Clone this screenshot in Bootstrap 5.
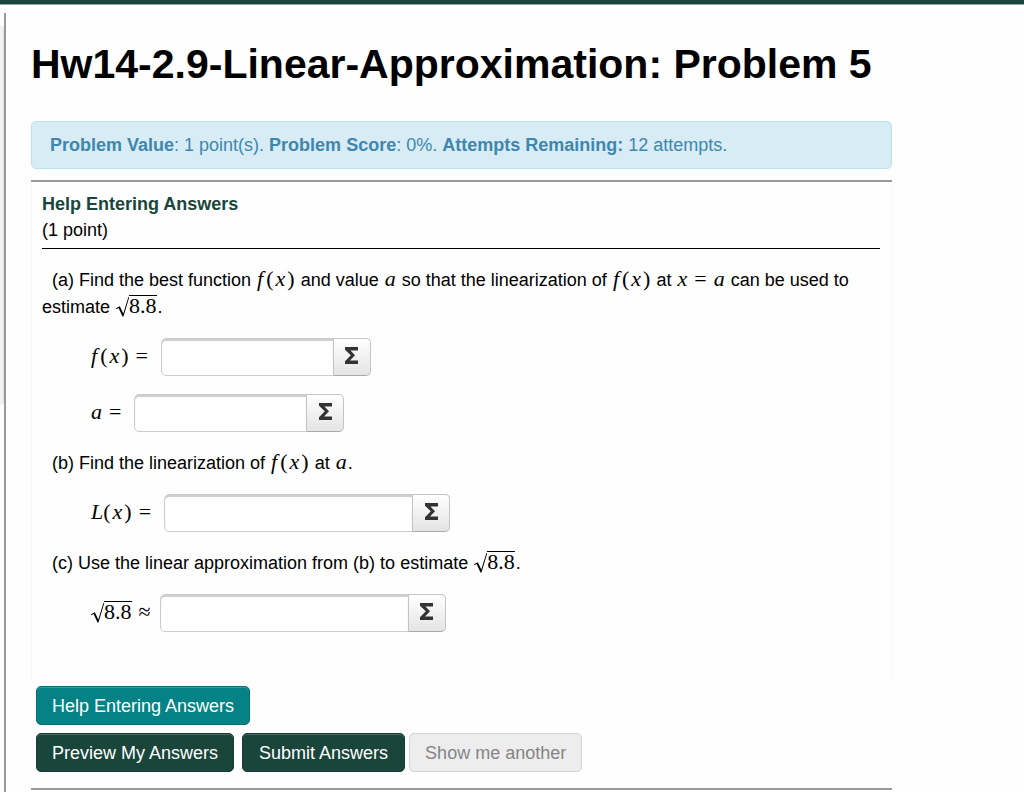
<!DOCTYPE html>
<html lang="en">
<head>
<meta charset="utf-8">
<meta name="viewport" content="width=device-width, initial-scale=1">
<title>Hw14-2.9-Linear-Approximation: Problem 5</title>
<link href="https://cdn.jsdelivr.net/npm/bootstrap@5.3.0/dist/css/bootstrap.min.css" rel="stylesheet">
<style>
  body { font-family: "Liberation Sans", Arial, sans-serif; font-size: 18px; line-height: 27px; color: #000; background: #fefefe; }
  .topbar { height: 5px; background: #1a453b; border-bottom: 1px solid #8fa7a1; }
  .side { width: 4px; height: 380px; margin-top: 12px; background: #f3f3f3; border-right: 1px solid #e3e3e3; border-radius: 0 5px 5px 0; }
  .page-body { margin-top: 8px; min-height: calc(100vh - 13px); }
  .content-col { border-left: 2px solid #999; padding: 27px 132px 0 25px; min-width: 0; }
  h1 { font-size: 41px; line-height: 48px; font-weight: 700; margin-bottom: 33px; }
  .alert-score { background: #d7ecf5; border: 1px solid #bce3ea; color: #3f87ad; border-radius: 5px; padding: 10px 18px; line-height: 26px; margin-bottom: 11px; }
  .rule { height: 2px; background: #999; border: 0; opacity: 1; margin: 0; }
  .problem { border: solid #f8f8f8; border-width: 0 1px; padding: 9px 11px 32px 10px; }
  .intro { line-height: 26px; }
  .help-link { color: #1a453b; font-weight: 700; text-decoration: none; }
  .inner-rule { border-top: 1px solid #000; opacity: 1; margin: 5px 0 18px; }
  .problem p { margin-bottom: 17px; }
  .part { padding-left: 10px; }
  .lead-in { text-indent: 10px; }
  .answer { margin: 0 0 18px 49px; }
  .math { font-family: "Liberation Serif", "Times New Roman", serif; font-size: 22px; line-height: 24px; white-space: nowrap; text-indent: 0; }
  p .math { padding: 0 1px; }
  .math .arg { padding: 0 2px; }
  .math .fn { padding-right: 3px; }
  .answer .math { padding-bottom: 3px; }
  .rel { padding: 0 5px 0 7px; }
  p .rel { padding: 0 7px; }
  .radicand { border-top: 1px solid #000; display: inline-block; line-height: 19px; }
  .radical { width: 13px; height: 20px; vertical-align: -4px; }
  .short { width: 210px; }
  .long { width: 286px; }
  .answer .form-control { height: 38px; border: 1px solid #ccc; border-radius: 5px; box-shadow: inset 0 2px 1px #ccc; }
  .sigma { width: 38px; padding: 0; border: 1px solid #c4c4c4; border-bottom-color: #aaa; border-radius: 5px; background: linear-gradient(#fff, #e4e4e4); }
  .sigma svg { width: 13px; height: 17px; display: block; margin: -3px auto 0; }
  .actions { padding: 4px 0 16px 5px; }
  .btn-ww { font-size: 18px; line-height: 24px; height: 39px; padding: 6px 15px; border-radius: 5px; }
  .btn-teal { background: #058285; color: #fff; border-color: #057073; box-shadow: inset 0 1px 0 #379b9d; }
  .btn-green { background: #1a453b; color: #fff; border-color: #173c33; box-shadow: inset 0 1px 0 #486a62; }
  .btn-wide { padding: 6px 16px; }
  .btn-off:disabled { background: #ededed; color: #858585; border-color: #d4d4d4; opacity: 1; }
</style>
</head>
<body>
<svg class="d-none" xmlns="http://www.w3.org/2000/svg">
  <symbol id="root" viewBox="0 0 13 20"><path d="M0 11.300L3.800 9.200 7.300 16.500 12.400 0H13.300L7.500 19.500H6.500L2.600 11.100.4 12.200Z" fill="#000"/></symbol>
  <symbol id="sum" viewBox="0 0 13 17"><path d="M0 0H13V3.500H5.500L10 8.300 5 13.500H13V17H0V14.200L5.800 8.300 0 2.800Z" fill="#333"/></symbol>
</svg>
<div class="topbar"></div>
<div class="page-body d-flex">
  <div class="side flex-shrink-0"></div>
  <main class="content-col flex-grow-1">
    <h1>Hw14-2.9-Linear-Approximation: Problem 5</h1>
    <div class="alert alert-score"><strong>Problem Value</strong>: 1 point(s). <strong>Problem Score</strong>: 0%. <strong>Attempts Remaining:</strong> 12 attempts.</div>
    <hr class="rule">
    <form>
      <div class="problem">
        <div class="intro"><a class="help-link" href="#">Help Entering Answers</a><br>(1 point)</div>
        <hr class="inner-rule">

        <p class="lead-in">(a) Find the best function <span class="math"><i class="fn">f</i>(<i class="arg">x</i>)</span> and value <span class="math"><i>a</i></span> so that the linearization of <span class="math"><i class="fn">f</i>(<i class="arg">x</i>)</span> at <span class="math"><i>x</i><span class="rel">=</span><i>a</i></span> can be used to estimate <span class="math"><svg class="radical"><use href="#root"/></svg><span class="radicand">8.8</span></span>.</p>

        <div class="answer d-flex align-items-center">
          <label class="math me-2" for="ansF"><i class="fn">f</i>(<i class="arg">x</i>)<span class="rel">=</span></label>
          <div class="input-group short"><input class="form-control" type="text" id="ansF"><button class="btn sigma" type="button" aria-label="Equation editor"><svg><use href="#sum"/></svg></button></div>
        </div>
        <div class="answer d-flex align-items-center">
          <label class="math me-2" for="ansA"><i>a</i><span class="rel">=</span></label>
          <div class="input-group short"><input class="form-control" type="text" id="ansA"><button class="btn sigma" type="button" aria-label="Equation editor"><svg><use href="#sum"/></svg></button></div>
        </div>

        <p class="part">(b) Find the linearization of <span class="math"><i class="fn">f</i>(<i class="arg">x</i>)</span> at <span class="math"><i>a</i></span>.</p>
        <div class="answer d-flex align-items-center">
          <label class="math me-2" for="ansL"><i>L</i>(<i class="arg">x</i>)<span class="rel">=</span></label>
          <div class="input-group long"><input class="form-control" type="text" id="ansL"><button class="btn sigma" type="button" aria-label="Equation editor"><svg><use href="#sum"/></svg></button></div>
        </div>

        <p class="part">(c) Use the linear approximation from (b) to estimate <span class="math"><svg class="radical"><use href="#root"/></svg><span class="radicand">8.8</span></span>.</p>
        <div class="answer d-flex align-items-center">
          <label class="math me-1" for="ansS"><svg class="radical"><use href="#root"/></svg><span class="radicand">8.8</span><span class="rel">≈</span></label>
          <div class="input-group long"><input class="form-control" type="text" id="ansS"><button class="btn sigma" type="button" aria-label="Equation editor"><svg><use href="#sum"/></svg></button></div>
        </div>
      </div>

      <div class="actions">
        <button class="btn btn-ww btn-teal mb-2" type="button">Help Entering Answers</button>
        <div class="d-flex flex-wrap">
          <button class="btn btn-ww btn-green me-2" type="button">Preview My Answers</button>
          <button class="btn btn-ww btn-green btn-wide me-1" type="submit">Submit Answers</button>
          <button class="btn btn-ww btn-off" type="button" disabled>Show me another</button>
        </div>
      </div>
      <hr class="rule">
    </form>
  </main>
</div>
<script src="https://cdn.jsdelivr.net/npm/bootstrap@5.3.0/dist/js/bootstrap.bundle.min.js"></script>
</body>
</html>
